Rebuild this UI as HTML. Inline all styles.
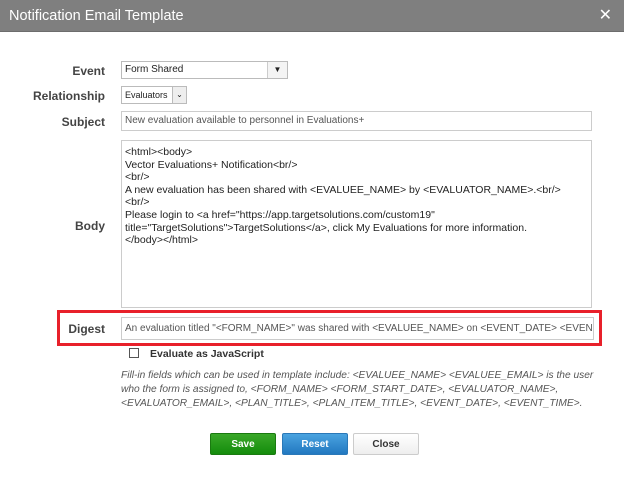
<!DOCTYPE html>
<html><head><style>
*{box-sizing:border-box;margin:0;padding:0}
body{width:624px;height:479px;background:#fff;font-family:"Liberation Sans",Arial,sans-serif;position:relative;overflow:hidden;color:#333}
.t{position:absolute;left:0;top:0;width:624px;height:32px;background:#7f7f7f;border-bottom:1px solid #6d6d6d;color:#fff;font-size:14.5px;line-height:32px;padding-left:9px}
.x{position:absolute;right:12px;top:0;font-size:16px;color:#fff}
.l{position:absolute;font-size:12px;font-weight:bold;color:#444;text-align:right;width:100px;left:5px}
.b{position:absolute;border:1px solid #ccc;background:#fff;font-size:10px;color:#555;padding-left:3px}
.btn{position:absolute;top:433px;height:22px;width:66px;font-size:10px;font-weight:bold;text-align:center;line-height:22px;border-radius:2px}
</style></head><body>
<div class="t">Notification Email Template<span class="x">✕</span></div>
<div class="l" style="top:64px">Event</div>
<div class="b" style="left:121px;top:61px;width:167px;height:18px;line-height:16px;color:#222;border-color:#bbb">Form Shared
<div style="position:absolute;right:0;top:0;width:20px;height:16px;border-left:1px solid #ccc;background:#f4f4f4;font-size:8px;text-align:center;color:#222">▼</div></div>
<div class="l" style="top:89px">Relationship</div>
<div class="b" style="left:121px;top:86px;width:66px;height:18px;line-height:16px;font-size:9px;color:#222;border-color:#bbb">Evaluators
<div style="position:absolute;right:0;top:0;width:14px;height:16px;border-left:1px solid #bbb;background:#eee;font-size:8px;text-align:center">⌄</div></div>
<div class="l" style="top:115px">Subject</div>
<div class="b" style="left:121px;top:111px;width:471px;height:20px;line-height:18px">New evaluation available to personnel in Evaluations+</div>
<div class="l" style="top:219px">Body</div>
<div class="b" style="left:121px;top:140px;width:471px;height:168px;font-size:10.5px;line-height:12.6px;color:#222;padding:5px 3px">&lt;html&gt;&lt;body&gt;<br>Vector Evaluations+ Notification&lt;br/&gt;<br>&lt;br/&gt;<br>A new evaluation has been shared with &lt;EVALUEE_NAME&gt; by &lt;EVALUATOR_NAME&gt;.&lt;br/&gt;<br>&lt;br/&gt;<br>Please login to &lt;a href="https://app.targetsolutions.com/custom19"<br>title="TargetSolutions"&gt;TargetSolutions&lt;/a&gt;, click My Evaluations for more information.<br>&lt;/body&gt;&lt;/html&gt;</div>
<div style="position:absolute;left:57px;top:310px;width:545px;height:36px;border:3px solid #e8202a"></div>
<div class="l" style="top:322px;left:5px">Digest</div>
<div class="b" style="left:121px;top:317px;width:473px;height:23px;line-height:21px;white-space:nowrap;overflow:hidden">An evaluation titled "&lt;FORM_NAME&gt;" was shared with &lt;EVALUEE_NAME&gt; on &lt;EVENT_DATE&gt; &lt;EVENT_TIME&gt;</div>
<div style="position:absolute;left:129px;top:348px;width:10px;height:10px;border:1px solid #555"></div>
<div style="position:absolute;left:150px;top:348px;font-size:10.5px;font-weight:bold;color:#333">Evaluate as JavaScript</div>
<div style="position:absolute;left:121px;top:369px;width:480px;font-size:10.2px;font-style:italic;line-height:14px;color:#555">Fill-in fields which can be used in template include: &lt;EVALUEE_NAME&gt; &lt;EVALUEE_EMAIL&gt; is the user who the form is assigned to, &lt;FORM_NAME&gt; &lt;FORM_START_DATE&gt;, &lt;EVALUATOR_NAME&gt;, &lt;EVALUATOR_EMAIL&gt;, &lt;PLAN_TITLE&gt;, &lt;PLAN_ITEM_TITLE&gt;, &lt;EVENT_DATE&gt;, &lt;EVENT_TIME&gt;.</div>
<div class="btn" style="left:210px;background:linear-gradient(#3aa829,#148c0c);color:#fff;border:1px solid #1a7a10">Save</div>
<div class="btn" style="left:282px;background:linear-gradient(#4aa3e0,#2278c0);color:#fff;border:1px solid #2a78b8">Reset</div>
<div class="btn" style="left:353px;background:linear-gradient(#fff,#eee);color:#333;border:1px solid #ccc">Close</div>
</body></html>
